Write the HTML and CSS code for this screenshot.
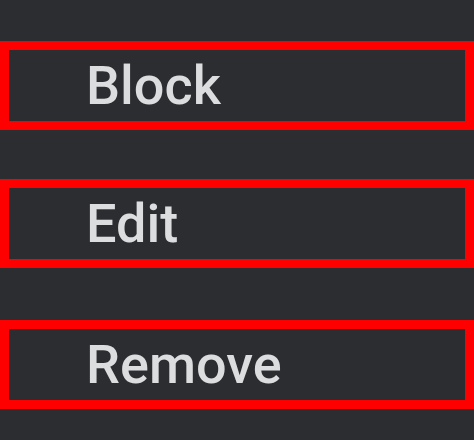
FILE: index.html
```html
<!DOCTYPE html>
<html>
<head>
<meta charset="utf-8">
<link rel="stylesheet" href="styles.css">
</head>
<body>
<div class="menu">
  <div class="item item-block">Block</div>
  <div class="item item-edit">Edit</div>
  <div class="item item-remove">Remove</div>
</div>
</body>
</html>
```
FILE: styles.css
```css
html, body {
  margin: 0;
  padding: 0;
  background: #2b2d31;
  width: 474px;
  height: 440px;
  overflow: hidden;
}
.menu {
  display: flex;
  flex-direction: column;
  padding-top: 41px;
}
.item {
  box-sizing: border-box;
  width: 474px;
  height: 89px;
  border: 9px solid #ff0000;
  display: flex;
  align-items: center;
  padding-left: 77px;
  font-family: Roboto, "Noto Sans", sans-serif;
  font-size: 54px;
  font-weight: 500;
  color: #dcddde;
  line-height: 1;
}
.item-edit { margin-top: 49px; }
.item-remove { margin-top: 52px; }
```
